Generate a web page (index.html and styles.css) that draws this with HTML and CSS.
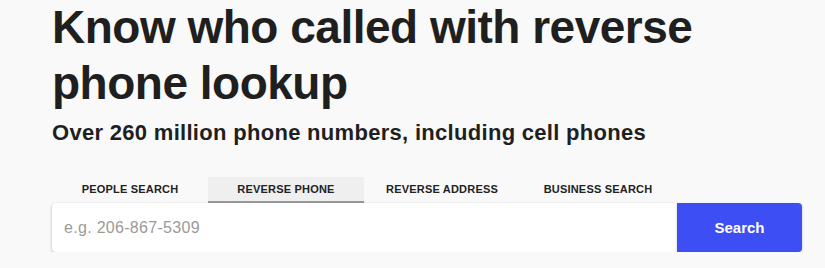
FILE: index.html
```html
<!DOCTYPE html>
<html lang="en">
<head>
    <meta charset="UTF-8">
    <meta name="viewport" content="width=device-width, initial-scale=1.0">
    <title>Reverse Phone Lookup</title>
    <link rel="stylesheet" href="styles.css">
</head>
<body>
    <div class="hero">
        <h1>Know who called with reverse phone lookup</h1>
        <h2>Over 260 million phone numbers, including cell phones</h2>

        <div class="tabs">
            <button class="tab">PEOPLE SEARCH</button>
            <button class="tab active">REVERSE PHONE</button>
            <button class="tab">REVERSE ADDRESS</button>
            <button class="tab">BUSINESS SEARCH</button>
        </div>

        <form class="search">
            <input type="text" class="search-input" placeholder="e.g. 206-867-5309">
            <button type="submit" class="search-button">Search</button>
        </form>
    </div>
</body>
</html>
```

FILE: styles.css
```css
body {
    font-family: "Liberation Sans", Arial, sans-serif;
    background-color: #f9f9f9;
    color: #1f1f1f;
    margin: 0;
}

.hero {
    width: 750px;
    padding: 0 0 0 52px;
}

h1 {
    font-size: 46px;
    line-height: 56px;
    font-weight: bold;
    letter-spacing: -0.5px;
    margin: -1px 0 0;
    width: 680px;
}

h2 {
    font-size: 22px;
    line-height: 28px;
    font-weight: bold;
    letter-spacing: 0.3px;
    margin: 8px 0 0;
}

.tabs {
    display: flex;
    margin-top: 30px;
}

.tab {
    width: 156px;
    height: 26px;
    padding: 0;
    border: none;
    border-bottom: 2px solid transparent;
    background: none;
    font-family: "Liberation Sans", Arial, sans-serif;
    font-size: 11px;
    font-weight: bold;
    letter-spacing: 0.2px;
    color: #222;
    cursor: pointer;
}

.tab.active {
    background-color: #efefef;
    border-bottom-color: #9a9a9a;
}

.search {
    display: flex;
    width: 750px;
    height: 49px;
}

.search-input {
    flex: 1;
    border: none;
    border-radius: 4px 0 0 4px;
    background-color: #fff;
    box-shadow: 0 1px 3px rgba(0, 0, 0, 0.3);
    padding: 0 12px;
    font-family: "Liberation Sans", Arial, sans-serif;
    font-size: 16px;
    letter-spacing: 0.3px;
    color: #222;
    outline: none;
}

.search-input::placeholder {
    color: #9a9a9a;
}

.search-button {
    width: 125px;
    border: none;
    border-radius: 0 4px 4px 0;
    background-color: #3d4ef5;
    color: #fff;
    font-family: "Liberation Sans", Arial, sans-serif;
    font-size: 15px;
    font-weight: bold;
    box-shadow: 0 1px 3px rgba(0, 0, 0, 0.2);
    cursor: pointer;
}
```
